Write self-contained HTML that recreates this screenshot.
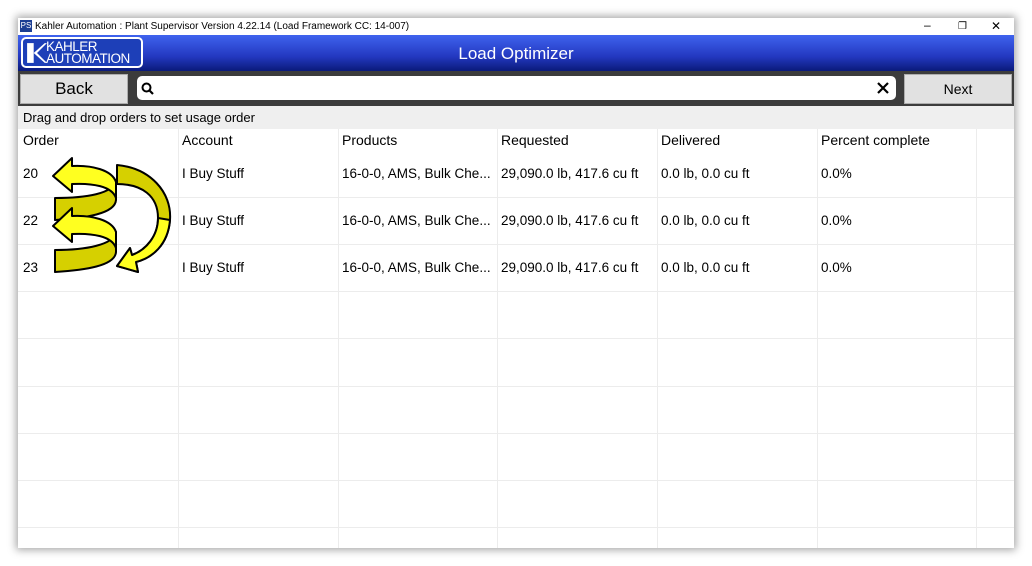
<!DOCTYPE html>
<html><head><meta charset="utf-8"><style>
*{margin:0;padding:0;box-sizing:border-box}
body{width:1032px;height:566px;background:#fff;font-family:"Liberation Sans",Arial,sans-serif;position:relative;overflow:hidden}
.win{position:absolute;left:18px;top:18px;width:996px;height:530px;background:#fff;box-shadow:0 0 8px 2px rgba(0,0,0,.35)}
.tb{position:absolute;left:0;top:0;width:996px;height:17px;background:#fff;font-size:10px;line-height:17px}
.ps{position:absolute;left:2px;top:2px;width:12px;height:12px;background:#1c3f94;color:#fff;font-size:8px;line-height:12px;text-align:center}
.hdr{position:absolute;left:0;top:17px;width:996px;height:36px;background:linear-gradient(#3f63ee,#2338c0 60%,#0a1a7a)}
.hdr .t{position:absolute;left:0;width:996px;text-align:center;top:9px;color:#fff;font-size:17px}
.logo{position:absolute;left:3px;top:2px;width:122px;height:31px;border:2px solid #fff;border-radius:5px;background:#1d3fb8}
.bar{position:absolute;left:0;top:53px;width:996px;height:35px;background:#3c3c3c}
.btn{position:absolute;top:3px;height:30px;background:#e1e1e1;border:1px solid #adadad;font-size:17px;text-align:center;line-height:28px}
.search{position:absolute;left:119px;top:5px;width:759px;height:24px;background:#fff;border-radius:5px}
.strip{position:absolute;left:0;top:88px;width:996px;height:23px;background:#efefef;font-size:13px;line-height:23px;padding-left:5px}
.grid{position:absolute;left:0;top:111px;width:996px;height:419px}
.v{position:absolute;top:0;bottom:0;width:1px;background:#ececec}
.h{position:absolute;left:0;right:0;height:1px;background:#ececec}
.c{position:absolute;font-size:13.5px;white-space:nowrap}
</style></head><body>
<div class="win">
 <div class="tb"><div class="ps">PS</div><span style="position:absolute;left:17px">Kahler Automation : Plant Supervisor Version 4.22.14 (Load Framework CC: 14-007)</span>
  <span style="position:absolute;left:906px;top:-1px;font-size:12px">–</span>
  <span style="position:absolute;left:940px;top:0;font-size:10px">❐</span>
  <span style="position:absolute;left:973px;top:0;font-size:12px">✕</span></div>
 <div class="hdr">
  <div class="logo">
   <svg width="22" height="22" style="position:absolute;left:3px;top:3px" viewBox="0 0 20 20"><rect x="1" y="1" width="6" height="18" fill="#fff"/><path d="M7 10 L17 1 L19 1 L10 10 L19 19 L17 19 Z" fill="#fff"/></svg>
   <div style="position:absolute;left:23px;top:2px;color:#fff;font-size:13.5px;line-height:12px;letter-spacing:-.5px">KAHLER<br>AUTOMATION</div>
  </div>
  <div class="t">Load Optimizer</div>
 </div>
 <div class="bar">
  <div class="btn" style="left:2px;width:108px">Back</div>
  <div class="search">
   <svg width="14" height="14" style="position:absolute;left:4px;top:6px" viewBox="0 0 14 14"><circle cx="5.5" cy="5.5" r="4" fill="none" stroke="#000" stroke-width="2"/><path d="M8.5 8.5 L12 12" stroke="#000" stroke-width="2.2"/></svg>
   <svg width="14" height="14" style="position:absolute;left:739px;top:5px" viewBox="0 0 14 14"><path d="M2 2 L12 12 M12 2 L2 12" stroke="#000" stroke-width="2.2"/></svg>
  </div>
  <div class="btn" style="left:886px;width:108px;font-size:14px">Next</div>
 </div>
 <div class="strip">Drag and drop orders to set usage order</div>
 <div class="grid">
  <div class="v" style="left:160px"></div><div class="v" style="left:320px"></div><div class="v" style="left:479px"></div><div class="v" style="left:639px"></div><div class="v" style="left:799px"></div><div class="v" style="left:958px"></div>
  <div class="h" style="top:68px"></div><div class="h" style="top:115px"></div><div class="h" style="top:162px"></div><div class="h" style="top:209px"></div><div class="h" style="top:257px"></div><div class="h" style="top:304px"></div><div class="h" style="top:351px"></div><div class="h" style="top:398px"></div>
  <div class="c" style="left:5px;top:3px;font-size:14px">Order</div><div class="c" style="left:164px;top:3px;font-size:14px">Account</div><div class="c" style="left:324px;top:3px;font-size:14px">Products</div><div class="c" style="left:483px;top:3px;font-size:14px">Requested</div><div class="c" style="left:643px;top:3px;font-size:14px">Delivered</div><div class="c" style="left:803px;top:3px;font-size:14px">Percent complete</div>
  <div class="c" style="left:5px;top:37px">20</div><div class="c" style="left:164px;top:37px">I Buy Stuff</div><div class="c" style="left:324px;top:37px">16-0-0, AMS, Bulk Che...</div><div class="c" style="left:483px;top:37px">29,090.0 lb, 417.6 cu ft</div><div class="c" style="left:643px;top:37px">0.0 lb, 0.0 cu ft</div><div class="c" style="left:803px;top:37px">0.0%</div>
  <div class="c" style="left:5px;top:84px">22</div><div class="c" style="left:164px;top:84px">I Buy Stuff</div><div class="c" style="left:324px;top:84px">16-0-0, AMS, Bulk Che...</div><div class="c" style="left:483px;top:84px">29,090.0 lb, 417.6 cu ft</div><div class="c" style="left:643px;top:84px">0.0 lb, 0.0 cu ft</div><div class="c" style="left:803px;top:84px">0.0%</div>
  <div class="c" style="left:5px;top:131px">23</div><div class="c" style="left:164px;top:131px">I Buy Stuff</div><div class="c" style="left:324px;top:131px">16-0-0, AMS, Bulk Che...</div><div class="c" style="left:483px;top:131px">29,090.0 lb, 417.6 cu ft</div><div class="c" style="left:643px;top:131px">0.0 lb, 0.0 cu ft</div><div class="c" style="left:803px;top:131px">0.0%</div>
 </div>
</div>
<svg width="1032" height="566" style="position:absolute;left:0;top:0" viewBox="0 0 1032 566">
 <g stroke="#000" stroke-width="2" stroke-linejoin="round">
  <path d="M117 165 C150 168 172 192 170 220 C168 245 152 258 136 262 L138 272 L117 266 L130 248 L132 255 C146 250 158 236 158 218 C158 196 142 184 117 184 Z" fill="#d6d000"/>
  <path d="M132 255 C146 250 158 236 158 218 L170 220 C168 245 152 258 136 262 L138 272 L117 266 L130 248 Z" fill="#ffff20"/>
  <path d="M55 198 C85 198 114 194 116 180 L116 200 C115 214 85 218 55 220 Z" fill="#d6d000"/>
  <path d="M116 182 C112 170 92 165 72 166 L72 158 L53 176 L72 192 L72 184 C92 183 112 186 116 198 Z" fill="#ffff20"/>
  <path d="M55 250 C85 250 114 245 116 232 L116 252 C115 266 85 270 55 272 Z" fill="#d6d000"/>
  <path d="M116 232 C112 220 92 215 72 216 L72 208 L53 226 L72 242 L72 234 C92 233 112 236 116 248 Z" fill="#ffff20"/>
 </g>
</svg>
</body></html>
